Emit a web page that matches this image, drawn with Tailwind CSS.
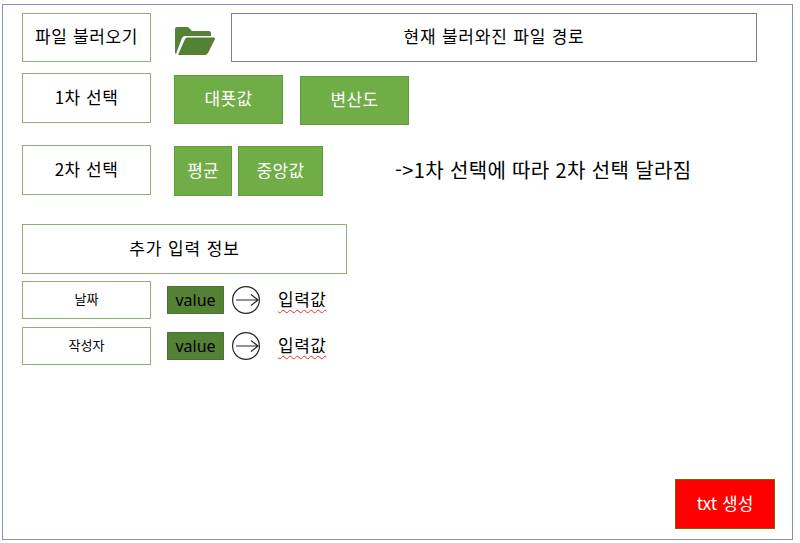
<!DOCTYPE html>
<html lang="ko">
<head>
  <meta charset="UTF-8" />
  <title>txt 생성</title>
  <script src="https://cdn.jsdelivr.net/npm/@tailwindcss/browser@4"></script>
</head>
<body class="bg-white w-[800px] h-[543px] overflow-hidden font-['Noto_Sans_CJK_KR','Noto_Sans',sans-serif] text-black">
  <div class="ml-[2px] mt-[4px] w-[791px] h-[536px] border border-[#7f95c0] pl-[19px] pt-[8px] flex flex-col">

    <!-- file row -->
    <div class="flex h-[49px] items-center">
      <div class="w-[129px] h-[49px] pb-[3px] border border-[#8fae7c] flex items-center justify-center text-[17px] tracking-[0.6px]">파일 불러오기</div>
      <svg class="ml-[24px] w-[42px] h-[34px] mt-[3px]" viewBox="0 0 42 34">
        <path d="M0 7q0-2 2-2h11l4 4h17q2 0 2 2v3H10q-2 0-3 2L1 32q-1 0-1-2z" fill="#548235"/>
        <path d="M3 33 10 17q.5-1.5 2-1.5h27q1.5 0 1 1.500L33 31q-1 2-3 2z" fill="#548235"/>
      </svg>
      <div class="ml-[14px] w-[526px] h-[49px] pb-[3px] border border-[#7f7f7f] flex items-center justify-center text-[17px] tracking-[0.8px]">현재 불러와진 파일 경로</div>
    </div>

    <!-- 1st choice -->
    <div class="flex mt-[11px] h-[52px]">
      <div class="w-[129px] h-[50px] pb-[3px] border border-[#8fae7c] flex items-center justify-center text-[17px] tracking-[0.5px]">1차 선택</div>
      <div class="ml-[23px] mt-[2px] w-[109px] h-[49px] pb-[3px] bg-[#70ad47] border border-[#5f9a3c] text-white flex items-center justify-center text-[17px] tracking-[0.4px]">대푯값</div>
      <div class="ml-[17px] mt-[3px] w-[109px] h-[49px] pb-[3px] bg-[#70ad47] border border-[#5f9a3c] text-white flex items-center justify-center text-[17px] tracking-[0.4px]">변산도</div>
    </div>

    <!-- 2nd choice -->
    <div class="flex mt-[20px] h-[51px]">
      <div class="w-[129px] h-[50px] pb-[3px] border border-[#8fae7c] flex items-center justify-center text-[17px] tracking-[0.5px]">2차 선택</div>
      <div class="ml-[23px] mt-[1px] w-[58px] h-[50px] pb-[3px] bg-[#70ad47] border border-[#5f9a3c] text-white flex items-center justify-center text-[17px]">평균</div>
      <div class="ml-[6px] mt-[1px] w-[85px] h-[50px] pb-[3px] bg-[#70ad47] border border-[#5f9a3c] text-white flex items-center justify-center text-[17px] tracking-[0.4px]">중앙값</div>
      <div class="ml-[72px] pb-[2px] flex items-center text-[20px] tracking-[0.35px]">-&gt;1차 선택에 따라 2차 선택 달라짐</div>
    </div>

    <!-- extra info -->
    <div class="mt-[28px] w-[325px] h-[50px] pb-[2px] border border-[#8fae7c] flex items-center justify-center text-[17px] tracking-[0.9px]">추가 입력 정보</div>

    <div class="flex items-center mt-[7px] h-[38px]">
      <div class="w-[129px] h-[38px] pb-[2px] border border-[#8fae7c] flex items-center justify-center text-[13px]">날짜</div>
      <div class="ml-[16px] w-[57px] h-[28px] bg-[#548235] border border-[#4a7430] flex items-center justify-center text-[16px] font-['Noto_Sans',sans-serif]">value</div>
      <svg class="ml-[8px] w-[28px] h-[28px]" viewBox="0 0 28 28" fill="none" stroke="#262626" stroke-width="1.2"><circle cx="14" cy="14" r="13.400"/><path d="M4 14h22M19 8.500l7 5.500-7 5.500"/></svg>
      <div class="ml-[18px] pb-[2px] text-[17px] tracking-[0.5px] underline decoration-wavy decoration-[#e03030] decoration-1 underline-offset-3">입력값</div>
    </div>

    <div class="flex items-center mt-[8px] h-[38px]">
      <div class="w-[129px] h-[38px] pb-[2px] border border-[#8fae7c] flex items-center justify-center text-[13px]">작성자</div>
      <div class="ml-[16px] w-[57px] h-[28px] bg-[#548235] border border-[#4a7430] flex items-center justify-center text-[16px] font-['Noto_Sans',sans-serif]">value</div>
      <svg class="ml-[8px] w-[28px] h-[28px]" viewBox="0 0 28 28" fill="none" stroke="#262626" stroke-width="1.2"><circle cx="14" cy="14" r="13.400"/><path d="M4 14h22M19 8.500l7 5.500-7 5.500"/></svg>
      <div class="ml-[18px] pb-[2px] text-[17px] tracking-[0.5px] underline decoration-wavy decoration-[#e03030] decoration-1 underline-offset-3">입력값</div>
    </div>

    <!-- generate -->
    <div class="mt-[114px] ml-[653px] w-[100px] h-[50px] pb-[2px] bg-[#ff0000] border border-[#7f6000] text-white flex items-center justify-center text-[17px]">txt 생성</div>
  </div>
</body>
</html>
